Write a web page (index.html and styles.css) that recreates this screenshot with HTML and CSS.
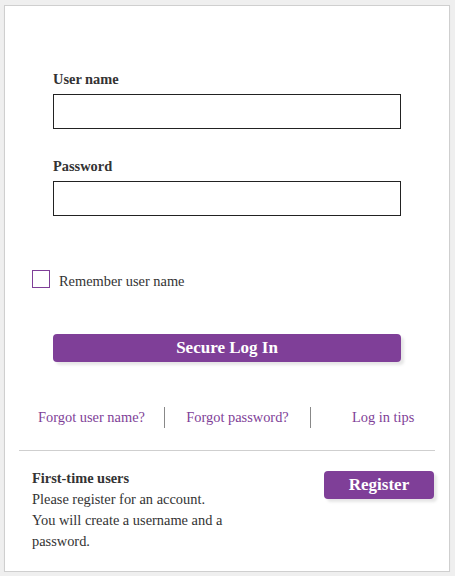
FILE: index.html
```html
<!DOCTYPE html>
<html lang="en">
<head>
<meta charset="utf-8">
<title>Log In</title>
<link rel="stylesheet" href="styles.css">
</head>
<body>
<div class="card">
  <form class="login">
    <label class="field-label" for="user">User name</label>
    <input class="field" id="user" type="text">
    <label class="field-label second" for="pass">Password</label>
    <input class="field" id="pass" type="password">
  </form>
  <div class="remember">
    <span class="box"></span>
    <span class="remember-text">Remember user name</span>
  </div>
  <div class="login-wrap">
    <button class="btn btn-login" type="button">Secure Log In</button>
  </div>
  <nav class="links">
    <a class="link c1" href="#">Forgot user name?</a>
    <a class="link c2" href="#">Forgot password?</a>
    <a class="link c3" href="#">Log in tips</a>
  </nav>
  <hr class="divider">
  <div class="first">
    <div class="first-text">
      <div class="first-title">First-time users</div>
      <div>Please register for an account.<br>You will create a username and a password.</div>
    </div>
    <button class="btn btn-register" type="button">Register</button>
  </div>
</div>
</body>
</html>
```
FILE: styles.css
```css
html, body {
  margin: 0;
  padding: 0;
  background: #efefef;
}
body {
  font-family: "Liberation Serif", "Times New Roman", serif;
  color: #333;
  font-size: 14.4px;
}
.card {
  box-sizing: border-box;
  width: 446px;
  height: 567px;
  margin: 5px 0 0 4px;
  background: #fff;
  border: 1px solid #cfcfcf;
  box-shadow: 0 1px 1px rgba(0,0,0,0.06);
}
.login {
  display: flex;
  flex-direction: column;
  padding: 65px 48px 0 48px;
  margin: 0;
}
.field-label {
  font-weight: bold;
  font-size: 14.4px;
  line-height: 16px;
  margin-bottom: 7px;
}
.field-label.second {
  margin-top: 29px;
}
.field {
  box-sizing: border-box;
  width: 348px;
  height: 35px;
  margin: 0;
  border: 1px solid #222;
  border-radius: 0;
  padding: 0 8px;
  font: inherit;
  background: #fff;
}
.remember {
  display: flex;
  align-items: center;
  margin: 54px 0 0 27px;
  height: 18px;
}
.box {
  box-sizing: border-box;
  width: 18px;
  height: 18px;
  border: 1px solid #7f3f98;
  background: #fff;
}
.remember-text {
  margin-left: 9px;
  line-height: 18px;
  padding-top: 3px;
}
.login-wrap {
  padding: 46px 48px 0 48px;
}
.btn {
  border: none;
  background: #7f3f98;
  color: #fff;
  font-family: "Liberation Serif", "Times New Roman", serif;
  font-weight: bold;
  font-size: 17px;
  border-radius: 4px;
  box-shadow: 3px 3px 3px rgba(0,0,0,0.1);
  padding: 0;
  cursor: pointer;
}
.btn-login {
  display: block;
  width: 348px;
  height: 28px;
  line-height: 28px;
}
.links {
  display: grid;
  grid-template-columns: 145px 146px 1fr;
  margin: 45px 0 0 14px;
}
.link {
  color: #7f3f98;
  text-decoration: none;
  font-size: 14.4px;
  line-height: 20px;
  height: 21px;
}
.c1, .c2 {
  text-align: center;
}
.c2, .c3 {
  border-left: 1px solid #888;
}
.c3 {
  padding-left: 41px;
}
.divider {
  border: none;
  border-top: 1px solid #cfcfcf;
  margin: 22px 14px 0 14px;
  height: 0;
}
.first {
  display: flex;
  justify-content: space-between;
  align-items: flex-start;
  padding: 0 15px 0 27px;
}
.first-text {
  width: 200px;
  line-height: 21px;
  margin-top: 17px;
}
.first-title {
  font-weight: bold;
}
.btn-register {
  width: 110px;
  height: 28px;
  line-height: 28px;
  margin-top: 20px;
}
```
